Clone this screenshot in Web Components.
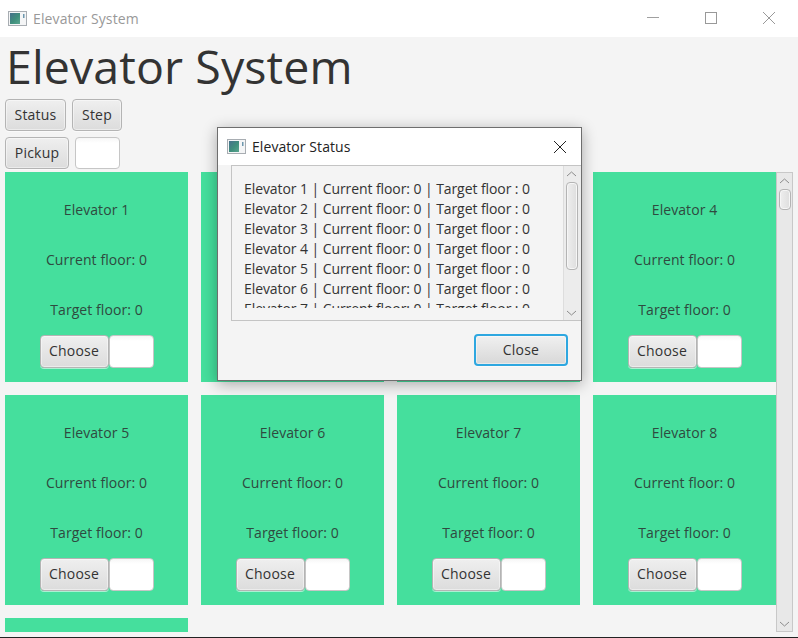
<!DOCTYPE html>
<html><head><meta charset="utf-8">
<style>
html,body{margin:0;padding:0;width:798px;height:638px;overflow:hidden;background:#f4f4f4}
body{font-family:"Open Sans","Noto Sans",sans-serif;color:#333}
</style></head><body>
<app-window></app-window>
<script>
const FONT='"Open Sans","Noto Sans",sans-serif';
const APPICON=`<svg width="19" height="15" viewBox="0 0 19 15" style="flex:none"><defs><linearGradient id="g" x1="0" y1="0" x2="1" y2="1"><stop offset="0" stop-color="#46708c"/><stop offset=".55" stop-color="#3f8f7c"/><stop offset="1" stop-color="#5aa58f"/></linearGradient></defs><rect x=".5" y=".5" width="18" height="14" fill="#f4f5f6" stroke="#a8adb2"/><rect x="2" y="2" width="10" height="11" fill="url(#g)"/><rect x="15" y="3" width="1.5" height="4" fill="#6d97ad"/></svg>`;
function def(name,html){customElements.define(name,class extends HTMLElement{connectedCallback(){if(this.shadowRoot)return;const s=this.attachShadow({mode:'open'});s.innerHTML=typeof html==='function'?html(this):html;}})}

def('fx-button',`<style>
:host{display:inline-flex;box-sizing:border-box;align-items:center;justify-content:center;height:33px;padding-bottom:var(--pb,0);border:1px solid #b4b4b4;border-radius:4px;background:linear-gradient(#efefef,#dcdcdc);box-shadow:inset 0 0 0 1px rgba(255,255,255,.45),0 1px 0 rgba(255,255,255,.55);font:14px/1 ${FONT};letter-spacing:.2px;color:#333}
:host([focused]){border:2px solid #2ea7e0;background:linear-gradient(#f0f0f0,#d8d8d8)}
</style><slot></slot>`);

def('fx-input',`<style>
:host{display:block;box-sizing:border-box;height:33px;border:1px solid #c6c6c6;border-radius:4px;background:linear-gradient(#f6f6f6,#fff 5px)}
</style>`);

def('win-title',`<style>
:host{display:flex;align-items:center;flex:none;height:37px;background:#fff;padding-left:8px;font:14px/1 ${FONT};letter-spacing:.13px;color:#999}
.t{margin-left:6px}
.ctl{margin-left:auto;display:flex}
.ctl svg{display:block;width:58px;height:37px}
</style>${APPICON}<span class="t">Elevator System</span>
<div class="ctl">
<svg viewBox="0 0 58 37"><path d="M23 17.5H35" stroke="#a0a0a0" fill="none"/></svg>
<svg viewBox="0 0 58 37"><rect x="23.5" y="12.5" width="11" height="11" stroke="#999" fill="none"/></svg>
<svg viewBox="0 0 58 37"><path d="M23 12L35 24M35 12L23 24" stroke="#999" fill="none"/></svg>
</div>`);

def('elevator-card',h=>{
const body=h.hasAttribute('covered')?'':`
<div class="l first">Elevator ${h.getAttribute('n')}</div>
<div class="l">Current floor: 0</div>
<div class="l">Target floor: 0</div>
<div class="row"><fx-button>Choose</fx-button><fx-input></fx-input></div>`;
return `<style>
:host{display:flex;flex-direction:column;align-items:center;box-sizing:border-box;height:210px;background:#45df9d;font:14px/1 ${FONT};letter-spacing:.07px;color:#2f4a40;--pb:2px}
.l{height:50px;display:flex;align-items:center;justify-content:center;white-space:nowrap}
.first{margin-top:13px}
.row{display:flex}
fx-button{width:69px}
fx-input{width:45px}
</style>${body}`});

def('scroll-bar',`<style>
:host{display:flex;flex-direction:column;align-items:center;box-sizing:border-box;width:17px;flex:none;background:#e8e8e8;border:1px solid #c8c8c8}
svg{display:block;flex:none}
.arrow{height:15px;display:flex;align-items:center;justify-content:center}
.thumb{box-sizing:border-box;width:12px;border:1px solid #b4b4b4;border-radius:4px;background:linear-gradient(90deg,#eee,#dedede);height:var(--thumb,21px);margin-top:1px;box-shadow:inset 0 0 0 1px #f6f6f6}
.sp{flex:1}
</style>
<div class="arrow"><svg width="11" height="6" viewBox="0 0 11 6"><path d="M1 5L5.5 1L10 5" stroke="#8c8c8c" fill="none"/></svg></div>
<div class="thumb"></div><div class="sp"></div>
<div class="arrow"><svg width="11" height="6" viewBox="0 0 11 6"><path d="M1 1L5.5 5L10 1" stroke="#8c8c8c" fill="none"/></svg></div>`);

def('elevator-grid',()=>{let c='';for(let i=1;i<=9;i++)c+=`<elevator-card n="${i}"${(i==2||i==3||i==9)?' covered':''}></elevator-card>`;
return `<style>
:host{display:flex;flex:none;height:460px;margin-left:5px;margin-right:5px}
.vp{width:771px;overflow:hidden;flex:none;height:460px}
.g{display:grid;grid-template-columns:repeat(4,183px);column-gap:13px;row-gap:13px}
</style><div class="vp"><div class="g">${c}</div></div><scroll-bar></scroll-bar>`});

def('status-dialog',()=>{let t='';for(let i=1;i<=7;i++)t+=`<div>Elevator ${i} | Current floor: 0 | Target floor : 0</div>`;
return `<style>
:host{position:absolute;left:217px;top:127px;width:365px;height:254px;box-sizing:border-box;border:1px solid #6e6e6e;background:#f4f4f4;box-shadow:0 3px 14px rgba(0,0,0,.32);display:flex;flex-direction:column}
.bar{height:37px;flex:none;background:#fff;display:flex;align-items:center;padding-left:9px;font:14px/1 ${FONT};letter-spacing:.07px;color:#222}
.bar span{margin-left:6px}
.bar svg.x{margin-left:auto;margin-right:14px}
.area{margin-left:13px;height:156px;flex:none;box-sizing:border-box;border:1px solid #c4c4c4;border-right:0;display:flex;background:#f4f4f4}
.txt{flex:1;min-width:0;box-sizing:border-box;padding:13px 0 0 12px;font:14px/20px ${FONT};letter-spacing:-.08px;color:#333;white-space:nowrap}
.clip{height:129px;overflow:hidden}
scroll-bar{--thumb:88px;width:18px;padding-right:2px;border:0;border-left:1px solid #ddd;background:#ececec}
.foot{flex:1;display:flex;justify-content:flex-end;align-items:flex-start;padding:13px 13px 0 0}
fx-button{width:94px;height:32px;--pb:1px}
</style>
<div class="bar">${APPICON}<span>Elevator Status</span><svg class="x" width="14" height="14" viewBox="0 0 14 14"><path d="M1 1L13 13M13 1L1 13" stroke="#222" fill="none"/></svg></div>
<div class="area"><div class="txt"><div class="clip">${t}</div></div><scroll-bar></scroll-bar></div>
<div class="foot"><fx-button focused>Close</fx-button></div>`});

def('app-window',`<style>
:host{display:flex;flex-direction:column;width:798px;height:638px;box-sizing:border-box;border-bottom:1px solid #222;position:relative;background:#f4f4f4;overflow:hidden}
h1{margin:0;height:62px;flex:none;font:400 46.5px/58px ${FONT};letter-spacing:.1px;color:#333;padding-left:6px;white-space:nowrap}
.r{display:flex;flex:none;margin-left:5px}
.r1{gap:6px;height:38px}
.r2{gap:6px;height:35px}
.r1 fx-button:nth-child(1){width:61px}
.r1 fx-button:nth-child(2){width:50px}
.r2 fx-button{width:64px}
.r2 fx-input{width:45px}
.r fx-button,.r fx-input{height:32px}
</style>
<win-title></win-title>
<h1>Elevator System</h1>
<div class="r r1"><fx-button>Status</fx-button><fx-button>Step</fx-button></div>
<div class="r r2"><fx-button>Pickup</fx-button><fx-input></fx-input></div>
<elevator-grid></elevator-grid>
<status-dialog></status-dialog>`);
</script>
</body></html>
